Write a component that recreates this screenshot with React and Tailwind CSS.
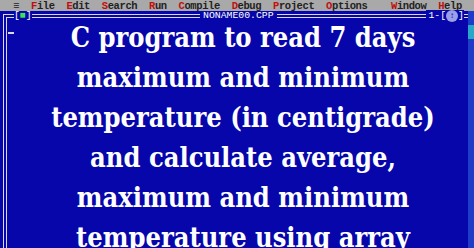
const menu = [
  ['F', 'ile'],
  ['E', 'dit'],
  ['S', 'earch'],
  ['R', 'un'],
  ['C', 'ompile'],
  ['D', 'ebug'],
  ['P', 'roject'],
  ['O', 'ptions'],
]

const lines = [
  'C program to read 7 days',
  'maximum and minimum',
  'temperature (in centigrade)',
  'and calculate average,',
  'maximum and minimum',
  'temperature using array',
]

const mono = { fontFamily: '"Liberation Mono", monospace' }

export default function App() {
  return (
    <div className="w-[474px] h-[248px] overflow-hidden bg-[#0606aa] flex flex-col relative">
      {/* Menu bar */}
      <div className="h-[11px] bg-[#a9a9a9] flex items-center text-[10.5px] tracking-[-0.4px] font-bold leading-[10px] text-[#222] whitespace-pre" style={mono}>
        <span className="pl-[13px] w-[31px]">≡</span>
        <div className="flex gap-[11.8px]">
          {menu.map(([first, rest]) => (
            <span key={first}><span className="text-[#c01010]">{first}</span>{rest}</span>
          ))}
        </div>
        <span className="ml-[23.6px]"><span className="text-[#c01010]">W</span>indow</span>
        <span className="ml-[11.8px]"><span className="text-[#c01010]">H</span>elp</span>
      </div>

      {/* Editor window */}
      <div className="flex-1 flex relative">
        <div className="flex-1 ml-[3px] mt-[3px] border-l-[4px] border-t-[4px] border-double border-[#d8d8e8] relative">
          <div className="absolute -top-[7px] left-[7px] text-[9.8px] leading-none text-white whitespace-pre bg-[#0606aa]" style={mono}>
            [<span className="text-[#3ee05a]">■</span>]
          </div>
          <div className="absolute -top-[7px] left-[193px] text-[9.8px] leading-none text-white bg-[#0606aa] px-[3px]" style={mono}>
            NONAME00.CPP
          </div>
          <div className="absolute -top-[8px] right-[4px] text-[9.8px] leading-none text-white bg-[#0606aa] pl-[2px] flex items-center" style={mono}>
            1-[<span className="inline-block w-[12px] h-[12px] rounded-full bg-[#9aa0e8] text-[#0606aa] text-[8px] text-center leading-[12px]">↕</span>]
          </div>
          <div className="absolute top-[14px] left-[1px] w-[6px] h-[2px] bg-[#d8d8e8]" />
        </div>
        <div className="w-[6px] bg-[#1e3cc8] flex flex-col pt-[14px]">
          <div className="h-[14px] bg-[#28a8c8]" />
        </div>
      </div>

      {/* Heading overlay */}
      <div className="absolute inset-x-0 top-[18px] flex flex-col items-center text-white font-bold text-[27px] leading-[40px] pl-[12px]" style={{ fontFamily: '"DejaVu Serif Condensed", "DejaVu Serif", serif' }}>
        {lines.map((l, i) => (
          <div key={i} className="whitespace-nowrap">{l}</div>
        ))}
      </div>
    </div>
  )
}
